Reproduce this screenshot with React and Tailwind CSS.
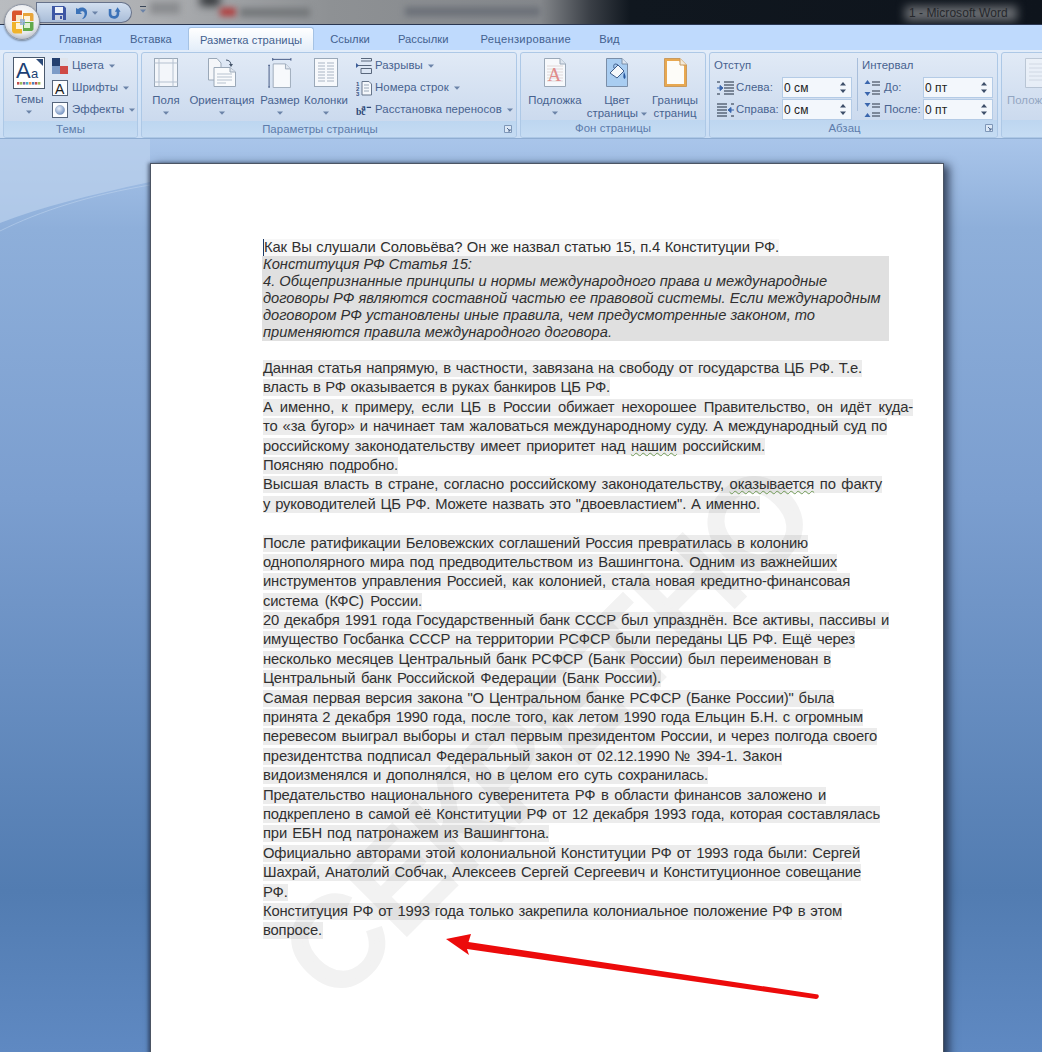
import React from "react";

const S = "font-['Liberation_Sans',Arial,sans-serif]";

const Caret = ({ cls = "" }) => (
  <svg width="6" height="4" viewBox="0 0 6 4" className={cls}><path d="M0 0.5H6L3 3.8Z" fill="#6b83a8" /></svg>
);

const Sheet = ({ w = 24, h = 30, fold = 7, stroke = "#9aa8b8", fill = "#f7f9fc", children }) => (
  <svg width={w} height={h} viewBox={`0 0 ${w} ${h}`}>
    <path d={`M.5 .5H${w - fold}L${w - .5} ${fold}V${h - .5}H.5Z`} fill={fill} stroke={stroke} />
    <path d={`M${w - fold} .5V${fold}H${w - .5}`} fill="#dfe6ef" stroke={stroke} />
    {children}
  </svg>
);

const IconThemes = () => (
  <svg width="32" height="32" viewBox="0 0 32 32">
    <rect x=".5" y=".5" width="31" height="31" fill="#fff" stroke="#4b5a6e" />
    <path d="M23 2h7v7Z" fill="#2c4a78" />
    <text x="3" y="21" fontSize="22" fill="#1c3f74" fontFamily="Liberation Sans">A</text>
    <text x="18" y="21" fontSize="13" fill="#1c3f74" fontFamily="Liberation Sans">a</text>
    {["#c0504d", "#9bbb59", "#8064a2", "#4bacc6", "#f79646", "#4f81bd", "#c0504d", "#9bbb59"].map((c, i) => (
      <rect key={i} x={4 + i * 3} y="25" width="2.4" height="2.6" fill={c} />
    ))}
  </svg>
);
const IconColors = () => (
  <svg width="16" height="16" viewBox="0 0 16 16">
    <rect width="8" height="8" fill="#24406f" /><rect x="8" width="8" height="8" fill="#dfe4ec" />
    <rect y="8" width="8" height="8" fill="#7c9bc7" /><rect x="8" y="8" width="8" height="8" fill="#cf4a46" />
  </svg>
);
const IconFonts = () => (
  <svg width="16" height="16" viewBox="0 0 16 16">
    <rect x=".5" y=".5" width="15" height="15" fill="#fbfdff" stroke="#55657c" />
    <text x="3" y="13.5" fontSize="14" fill="#1a1a1a" fontFamily="Liberation Sans">A</text>
  </svg>
);
const IconEffects = () => (
  <svg width="16" height="16" viewBox="0 0 16 16">
    <defs><radialGradient id="ef" cx=".4" cy=".35" r=".7"><stop offset="0" stopColor="#e8f0fb" /><stop offset="1" stopColor="#6f8fc0" /></radialGradient></defs>
    <rect x=".5" y=".5" width="15" height="15" fill="#fbfdff" stroke="#55657c" />
    <circle cx="8" cy="8" r="4.6" fill="url(#ef)" stroke="#8298b8" strokeWidth=".5" />
  </svg>
);
const IconMargins = () => (
  <svg width="24" height="30" viewBox="0 0 24 30">
    <rect x=".5" y=".5" width="23" height="28" fill="#f3f6fa" stroke="#9aa8b8" />
    <path d="M5 .5V28.5M19 .5V28.5M.5 5H23.5M.5 24H23.5" stroke="#b5c1d0" />
  </svg>
);
const IconOrient = () => (
  <svg width="28" height="30" viewBox="0 0 28 30">
    <path d="M.5 .5H9L13 5V22H.5Z" fill="#f4f6f9" stroke="#9aa8b8" />
    <path d="M6 9.5H22L27.5 14V28.5H6Z" fill="#f8fafc" stroke="#9aa8b8" />
    <path d="M22 9.5V14H27.5" fill="#dfe6ef" stroke="#9aa8b8" />
    <path d="M9 16H24M9 19H24M9 22H24M9 25H18" stroke="#b7c2cf" />
    <path d="M18 2C21 2 23 4 23 7" stroke="#44546a" fill="none" />
    <path d="M21 6H25L23 9Z" fill="#44546a" />
  </svg>
);
const IconSize = () => (
  <svg width="24" height="30" viewBox="0 0 26 33">
    <path d="M5 1.5H25M5 0V3M25 0V3M1 8V32M0 8H2M0 32H2" stroke="#3b4f7d" fill="none" />
    <path d="M5.5 6.5H19L24.500 12V32.500H5.500Z" fill="#f7f9fc" stroke="#9aa8b8" />
    <path d="M19 6.500V12H24.500" fill="#dfe6ef" stroke="#9aa8b8" />
  </svg>
);
const IconColumns = () => (
  <svg width="24" height="30" viewBox="0 0 24 30">
    <rect x=".5" y=".5" width="23" height="28" fill="#f7f9fc" stroke="#9aa8b8" />
    {[5, 8, 11, 14, 17, 20, 23].map(y => (
      <path key={y} d={`M4 ${y}H11M13 ${y}H20`} stroke="#aab5c4" />
    ))}
  </svg>
);
const IconBreaks = () => (
  <svg width="16" height="16" viewBox="0 0 16 16">
    <path d="M5 .5H15.500V3M5 3H15.500M0 7.500H15.500M5 10.500H15.500V15.500H5Z" fill="none" stroke="#59677c" />
    <path d="M0 5V10L3 7.500Z" fill="#3c5d98" />
  </svg>
);
const IconLineNo = () => (
  <svg width="16" height="16" viewBox="0 0 16 16">
    <path d="M6 1.500H13L15.500 4V15H6Z" fill="#f4f7fb" stroke="#66758a" />
    <path d="M8 5H13M8 8H13M8 11H13" stroke="#9aa8b8" />
    <text x="0" y="5.500" fontSize="6" fontWeight="bold" fill="#37507c">1</text>
    <text x="0" y="10.500" fontSize="6" fontWeight="bold" fill="#37507c">2</text>
    <text x="0" y="15.500" fontSize="6" fontWeight="bold" fill="#37507c">3</text>
  </svg>
);
const IconHyph = () => (
  <svg width="18" height="16" viewBox="0 0 18 16">
    <text x="0" y="14" fontSize="11" fontWeight="bold" fill="#2d4776" fontFamily="Liberation Serif">b</text>
    <text x="6" y="14" fontSize="11" fontWeight="bold" fill="#2d4776" fontFamily="Liberation Serif">c</text>
    <text x="6" y="8" fontSize="10" fontWeight="bold" fill="#2d4776" fontFamily="Liberation Serif">a</text>
    <path d="M12 5H17" stroke="#2d4776" strokeWidth="1.400" />
  </svg>
);
const IconWatermark = () => (
  <Sheet w={22} h={29} fold={6}>
    {[8, 11, 14, 17, 20, 23].map(y => <path key={y} d={`M3 ${y}H19`} stroke="#dfd8d8" />)}
    <text x="3.500" y="23" fontSize="19" fontFamily="Liberation Serif" fill="#e08b8b">A</text>
  </Sheet>
);
const IconPageColor = () => (
  <Sheet w={22} h={29} fold={6} fill="#a9cdf1" stroke="#7a8ea8">
    <path d="M4 15L12 7L18 13L11 20Z" fill="#f5f8fb" stroke="#3e5c8a" />
    <path d="M8 10C7 6 9 5 12 7" fill="none" stroke="#3e5c8a" />
    <path d="M18 14C20 18 20 20 18.500 21C17 20 17 18 18 14Z" fill="#2a5aa0" />
  </Sheet>
);
const IconBorders = () => (
  <svg width="23" height="29" viewBox="0 0 23 29">
    <path d="M.5 .5H16L22.500 7V28.500H.5Z" fill="#e8a850" stroke="#c99a5e" />
    <path d="M3 3H15L20 8V26H3Z" fill="#fdfcf8" />
    <path d="M16 .5V7H22.500" fill="#f3ead9" stroke="#c99a5e" />
  </svg>
);
const Launcher = () => (
  <svg width="8" height="8" viewBox="0 0 8 8"><path d="M.5 .5H7.500V7.500H.5Z" fill="#dce8f6" stroke="#7e97b8" /><path d="M3 3L6 6M6 4V6H4" stroke="#50698f" fill="none" /></svg>
);
const Spin = () => (
  <div className="flex flex-col gap-[3px] mr-[3px]">
    <svg width="6" height="4" viewBox="0 0 6 4"><path d="M0 3.500H6L3 0Z" fill="#3d4e69" /></svg>
    <svg width="6" height="4" viewBox="0 0 6 4"><path d="M0 .5H6L3 4Z" fill="#3d4e69" /></svg>
  </div>
);
const Field = ({ v }) => (
  <div className="w-[70px] h-[21px] bg-[#f3f7fc] border border-[#b4cbe6] flex items-center justify-between pl-[1px] pr-[2px] text-[12px] text-[#222]">
    <span>{v}</span><Spin />
  </div>
);
const IndentIcon = ({ flip }) => (
  <svg width="17" height="14" viewBox="0 0 17 14" className={flip ? "-scale-x-100" : ""}>
    <path d="M7 1H17M7 4H17M7 7H17M7 10H17M7 13H17M0 1H3M0 13H3" stroke="#1f2a3c" />
    <path d="M0 7H4M3 4.500L6 7L3 9.500Z" fill="#3b66ad" stroke="#3b66ad" />
  </svg>
);
const SpaceIcon = ({ up }) => (
  <svg width="16" height="18" viewBox="0 0 16 18">
    <path d="M8 3H16M8 6H16M8 12H16M8 15H16" stroke="#2a3444" strokeWidth="1.200" />
    <path d={up ? "M3.500 1L6.500 5H.5ZM3.500 17L6.500 13H.5Z" : "M3.500 6L6.500 2H.5ZM3.500 12L6.500 16H.5Z"} fill="#3b66ad" />
  </svg>
);

const Large = ({ w, icon, label, sub, caret = true }) => (
  <div className="flex flex-col items-center" style={{ width: w }}>
    <div className="h-[33px] flex items-start justify-center">{icon}</div>
    <div className="mt-[3px] text-[#47628f] leading-[13px] text-center whitespace-nowrap">{label}</div>
    {sub ? <div className="text-[#47628f] leading-[13px] text-center whitespace-nowrap">{sub}</div> : null}
    {caret ? <Caret cls="mt-[4px]" /> : null}
  </div>
);
const Small = ({ icon, label, iw = 16, gap = 4 }) => (
  <div className="flex items-center h-[22px] whitespace-nowrap text-[#47628f]">
    <div className="flex items-center" style={{ width: iw, marginRight: gap }}>{icon}</div>
    <span>{label}</span>
    <Caret cls="ml-[5px]" />
  </div>
);
const Group = ({ w, label, launcher, children, cls = "" }) => (
  <div className="flex flex-col rounded-[3px] border border-[#adc8e6] overflow-hidden bg-[linear-gradient(180deg,#e1eaf6,#c6d6ec)] shrink-0" style={{ width: w }}>
    <div className={"h-[68px] flex " + cls}>{children}</div>
    <div className={"h-[17px] bg-[linear-gradient(180deg,#bdd6f0,#c6dcf3)] flex items-center justify-center relative text-[#5d7cab] " + (launcher ? "pr-[18px]" : "")}>
      <span>{label}</span>
      {launcher ? <span className="absolute right-[4px] top-[4px] flex"><Launcher /></span> : null}
    </div>
  </div>
);

const tabs = ["Главная", "Вставка", "Разметка страницы", "Ссылки", "Рассылки", "Рецензирование", "Вид"];

const italic = [
  "Конституция РФ Статья 15:",
  "4. Общепризнанные принципы и нормы международного права и международные",
  "договоры РФ являются составной частью ее правовой системы. Если международным",
  "договором РФ установлены иные правила, чем предусмотренные законом, то",
  "применяются правила международного договора.",
];

const block1 = [
  ["Данная статья напрямую, в частности, завязана на свободу от государства ЦБ РФ. Т.е.", 862],
  ["власть в РФ оказывается в руках банкиров ЦБ РФ.", 610],
  ["А именно, к примеру, если ЦБ в России обижает нехорошее Правительство, он идёт куда-", 913],
  ["то «за бугор» и начинает там жаловаться международному суду. А международный суд по", 887],
  [<>российскому законодательству имеет приоритет над <span className="underline decoration-wavy decoration-[#6f9a55] decoration-1">нашим</span> российским.</>, 765],
  ["Поясняю подробно.", 398],
  [<>Высшая власть в стране, согласно российскому законодательству, <span className="underline decoration-wavy decoration-[#6f9a55] decoration-1">оказывается</span> по факту</>, 882],
  ["у руководителей ЦБ РФ. Можете назвать это \"двоевластием\". А именно.", 760],
];
const block2 = [
  ["После ратификации Беловежских соглашений Россия превратилась в колонию", 808],
  ["однополярного мира под предводительством из Вашингтона. Одним из важнейших", 837],
  ["инструментов управления Россией, как колонией, стала новая кредитно-финансовая", 850],
  ["система (КФС) России.", 422],
  ["20 декабря 1991 года Государственный банк СССР был упразднён. Все активы, пассивы и", 889],
  ["имущество Госбанка СССР на территории РСФСР были переданы ЦБ РФ. Ещё через", 855],
  ["несколько месяцев Центральный банк РСФСР (Банк России) был переименован в", 831],
  ["Центральный банк Российской Федерации (Банк России).", 661],
  ["Самая первая версия закона \"О Центральном банке РСФСР (Банке России)\" была", 834],
  ["принята 2 декабря 1990 года, после того, как летом 1990 года Ельцин Б.Н. с огромным", 863],
  ["перевесом выиграл выборы и стал первым президентом России, и через полгода своего", 877],
  ["президентства подписал Федеральный закон от 02.12.1990 № 394-1. Закон", 782],
  ["видоизменялся и дополнялся, но в целом его суть сохранилась.", 708],
  ["Предательство национального суверенитета РФ в области финансов заложено и", 826],
  ["подкреплено в самой её Конституции РФ от 12 декабря 1993 года, которая составлялась", 880],
  ["при ЕБН под патронажем из Вашингтона.", 549],
  ["Официально авторами этой колониальной Конституции РФ от 1993 года были: Сергей", 860],
  ["Шахрай, Анатолий Собчак, Алексеев Сергей Сергеевич и Конституционное совещание", 861],
  ["РФ.", 288],
  ["Конституция РФ от 1993 года только закрепила колониальное положение РФ в этом", 842],
  ["вопросе.", 323],
];

const Line = ({ t, r }) => (
  <div className="h-[19.4px]">
    <div className="h-[17px] leading-[17px] bg-black/[0.075] [text-align-last:justify]" style={{ width: r - 263 }}>{t}</div>
  </div>
);

const Tab = ({ t }) => {
  if (t === "Разметка страницы")
    return <div className="h-[23px] px-[11px] pt-[2px] flex items-center rounded-t-[3px] border border-b-0 border-[#a5c2e4] bg-[linear-gradient(180deg,#ffffff,#e4eef9)] whitespace-nowrap">{t}</div>;
  if (t === "Рецензирование")
    return <div className="h-[23px] ml-[4px] px-[11px] pt-[2px] flex items-center whitespace-nowrap border border-transparent tracking-[0.3px]">{t}</div>;
  return <div className="h-[23px] px-[11px] pt-[2px] flex items-center whitespace-nowrap border border-transparent">{t}</div>;
};

export default function App() {
  return (
    <div className={"relative h-[1052px] w-full overflow-hidden flex flex-col text-[11.4px] tracking-[0.05px] " + S}>
      {/* title bar */}
      <div className="relative h-[25px] shrink-0 overflow-hidden border-b border-[#2a3650] bg-[linear-gradient(90deg,#b9bcc0_0,#aeb0b3_140px,#8e9194_330px,#85888c_540px,#3a3f46_590px,#10171f_630px,#0e141c_100%)]">
        <div className="absolute left-[150px] top-[2px] w-[30px] h-[12px] bg-[#8b8d90] blur-[3px]" />
        <div className="absolute left-[200px] top-[-6px] w-[20px] h-[12px] bg-[#33363a] blur-[4px]" />
        <div className="absolute left-[220px] top-[8px] w-[16px] h-[8px] bg-[#b23a3a] blur-[3px]" />
        <div className="absolute left-[240px] top-[8px] w-[70px] h-[9px] bg-[#74777a] blur-[3px]" />
        <div className="absolute left-[405px] top-[7px] w-[135px] h-[9px] bg-[#6b7078] blur-[3px]" />
        <div className="absolute left-[905px] top-[6px] w-[112px] h-[15px] bg-[#6a6d72] blur-[5px]" />
        <span className="absolute left-[909px] top-[6px] text-[12px] leading-[15px] text-[#26282c] whitespace-nowrap">1 - Microsoft Word</span>
        {/* quick access */}
        <div className="absolute left-[36px] top-[2px] w-[96px] h-[21px] rounded-r-full rounded-l-[10px] border border-[#67728a] bg-[linear-gradient(180deg,#d2dff0,#a9bdd8)] flex items-center gap-[9px] pl-[15px]">
          <svg width="14" height="14" viewBox="0 0 14 14" className="shrink-0">
            <path d="M0 0H12L14 2V14H0Z" fill="#3d56a4" /><rect x="3" y="1" width="8" height="6" fill="#eef2f9" /><rect x="3" y="9" width="8" height="5" fill="#c8cfdf" /><rect x="8" y="10" width="2" height="3" fill="#3d56a4" />
          </svg>
          <div className="flex items-center gap-[3px]">
            <svg width="14" height="14" viewBox="0 0 14 14"><path d="M3 3C7 0 13 2 12 8C11.500 11 9 13 7 13C9 11 10 9 9.500 7C9 5 6.500 5 5 6L7 8H1V2Z" fill="#3b72b8" /></svg>
            <Caret />
          </div>
          <svg width="14" height="14" viewBox="0 0 16 15"><path d="M2 3V9C2 12 5 14 8 14C11 14 14 12 14 8L14 6H15.500L12 1L9 6H11V8C11 10 9.500 11 8 11C6.500 11 5 10 5 8V3Z" fill="#3b72b8" /></svg>
        </div>
        <div className="absolute left-[140px] top-[6px] flex flex-col gap-[2px]">
          <div className="w-[6px] h-[1px] bg-[#3a4658]" />
          <Caret />
        </div>
      </div>
      {/* office button */}
      <div className="absolute left-[4px] top-[4px] z-10 w-[36px] h-[36px] rounded-full bg-[radial-gradient(circle_at_50%_35%,#ffffff,#e6e8ec_60%,#8c95a4)] border border-[#8b93a2] flex items-center justify-center shadow-[0_1px_2px_rgba(0,0,0,.4)]">
        <svg width="23" height="24" viewBox="0 0 23 24">
          <path d="M1 3C1 1 2 .5 4 .5H11V11H1Z" fill="#d9552c" />
          <path d="M12 3H21C22 3 22.500 4 22.500 5V11H12Z" fill="#e8a53b" />
          <path d="M1 12H11V23.500H4C2 23.500 1 22 1 20Z" fill="#f0b32c" />
          <path d="M12 12H22.500V19C22.500 20.500 21 21 20 21H12Z" fill="#62a94a" />
          <rect x="5" y="5" width="6" height="6" fill="#fbe6c4" />
          <rect x="13" y="6" width="6" height="5" fill="#fff3da" />
          <rect x="5" y="13" width="6" height="6" fill="#fff3da" />
          <rect x="13" y="13" width="6" height="5" fill="#e1f0d6" />
          <path d="M9 9H14V15H9Z" fill="#8aa7d6" opacity=".75" />
        </svg>
      </div>

      {/* tabs */}
      <div className="h-[25px] shrink-0 bg-[#bfdafd] flex items-end pl-[47px] gap-[4px] text-[11.2px] text-[#43618f]">
        {tabs.map(t => <Tab key={t} t={t} />)}
      </div>

      {/* ribbon */}
      <div className="h-[89px] shrink-0 bg-[linear-gradient(180deg,#e2ecf9,#c9ddf4)] border-b border-[#8fadd2] flex pl-[3px] pt-[2px] gap-[3px] overflow-hidden">
        <Group w={135} label="Темы" cls="pl-[8px] pt-[4px]">
          <Large w={34} icon={<IconThemes />} label="Темы" />
          <div className="ml-[6px] -mt-[2px] flex flex-col">
            <Small icon={<IconColors />} label="Цвета" />
            <Small icon={<IconFonts />} label="Шрифты" />
            <Small icon={<IconEffects />} label="Эффекты" />
          </div>
        </Group>
        <Group w={376} label="Параметры страницы" launcher cls="pl-[5px] pt-[5px]">
          <Large w={38} icon={<IconMargins />} label="Поля" />
          <Large w={74} icon={<IconOrient />} label="Ориентация" />
          <Large w={42} icon={<IconSize />} label="Размер" />
          <Large w={50} icon={<IconColumns />} label="Колонки" />
          <div className="ml-[5px] -mt-[3px] flex flex-col">
            <Small icon={<IconBreaks />} label="Разрывы" iw={16} gap={3} />
            <Small icon={<IconLineNo />} label="Номера строк" iw={16} gap={3} />
            <Small icon={<IconHyph />} label="Расстановка переносов" iw={16} gap={3} />
          </div>
        </Group>
        <Group w={186} label="Фон страницы" cls="pl-[5px] pt-[5px]">
          <Large w={58} icon={<IconWatermark />} label="Подложка" />
          <Large w={66} icon={<IconPageColor />} label="Цвет" sub={<>страницы <Caret cls="inline align-middle" /></>} caret={false} />
          <Large w={50} icon={<IconBorders />} label="Границы" sub="страниц" caret={false} />
        </Group>
        <Group w={289} label="Абзац" launcher cls="pl-[4px] pt-[5px]">
          <div className="w-[143px] flex flex-col text-[#47628f]">
            <div className="h-[16px] flex items-center">Отступ</div>
            <div className="mt-[3px] flex items-center h-[21px]"><span className="ml-[3px] w-[19px]"><IndentIcon /></span><span className="w-[46px]">Слева:</span><Field v="0 см" /></div>
            <div className="mt-[1px] flex items-center h-[21px]"><span className="ml-[3px] w-[19px]"><IndentIcon flip /></span><span className="w-[46px]">Справа:</span><Field v="0 см" /></div>
          </div>
          <div className="w-px h-[53px] bg-[#a8bedb]" />
          <div className="ml-[4px] flex flex-col text-[#47628f]">
            <div className="h-[16px] flex items-center">Интервал</div>
            <div className="mt-[3px] flex items-center h-[21px]"><span className="ml-[2px] w-[20px]"><SpaceIcon up /></span><span className="w-[39px]">До:</span><Field v="0 пт" /></div>
            <div className="mt-[1px] flex items-center h-[21px]"><span className="ml-[2px] w-[20px]"><SpaceIcon /></span><span className="w-[39px]">После:</span><Field v="0 пт" /></div>
          </div>
        </Group>
        <Group w={80} label="" cls="pl-[5px] pt-[5px]">
          <div className="flex flex-col">
            <div className="h-[33px] pl-[18px] opacity-50"><Sheet w={24} h={30} fold={1}><path d="M4 6H20M4 10H20M4 14H20M4 18H20M4 22H20" stroke="#c5ccd6" /></Sheet></div>
            <div className="mt-[3px] text-[#93a6c2] leading-[13px]">Положение</div>
          </div>
        </Group>
      </div>

      {/* document area */}
      <div className="relative flex-1 min-h-0 bg-[linear-gradient(180deg,#a9c5ea_0,#8eafda_90px,#7b9ecf_360px,#527cb1_752px,#5f89c2_913px)]">
        <svg className="absolute left-0 top-0" width="150" height="110" viewBox="0 0 150 110">
          <path d="M0 0H150V43C90 56 40 68 0 84Z" fill="#bcd2ed" opacity=".7" />
          <path d="M0 92C40 72 90 56 150 46" fill="none" stroke="#c4d8ef" strokeWidth="1" opacity=".5" />
        </svg>
        <div className="relative ml-[150px] mt-[24px] w-[794px] h-[1200px] bg-white border-t border-l border-r border-[#4c5564] shadow-[5px_2px_9px_rgba(28,38,60,.8),-2px_0_3px_rgba(28,38,60,.5)] overflow-hidden pl-[112px] pt-[75px] text-[14.8px] tracking-[-0.15px] text-[#303030]">
          <div className="absolute left-[37px] top-[505px] w-[720px] text-center text-[#f2f2f2] text-[124px] leading-[125px] -rotate-[45deg] whitespace-nowrap select-none tracking-[2px] [-webkit-text-stroke:6px_#f2f2f2]">СЕКРЕТНО</div>
          <div className="relative">
            <div className="h-[17px] leading-[17px] w-[516px] bg-black/[0.03] [text-align-last:justify] border-l border-[#1d3a66]">Как Вы слушали Соловьёва? Он же назвал статью 15, п.4 Конституции РФ.</div>
            <div className="h-[85px] w-[627px] -ml-[1px] pl-[1px] bg-[#e0e0e0] italic text-[14.7px] tracking-normal">
              {italic.map((t, i) => <div key={i} className="h-[17px] leading-[17px] whitespace-nowrap">{t}</div>)}
            </div>
            <div className="h-[19px]" />
            {block1.map(([t, r], i) => <Line key={i} t={t} r={r} />)}
            <div className="h-[19.4px]" />
            {block2.map(([t, r], i) => <Line key={i} t={t} r={r} />)}
          </div>
        </div>
      </div>

      {/* arrow */}
      <svg className="absolute left-[440px] top-[930px]" width="385" height="75" viewBox="0 0 385 75">
        <path d="M6 9L31 4L28.500 12L378 64.500C380 66.500 378 69 376 69L27 19L29 25Z" fill="#ec0b0b" />
      </svg>
    </div>
  );
}
